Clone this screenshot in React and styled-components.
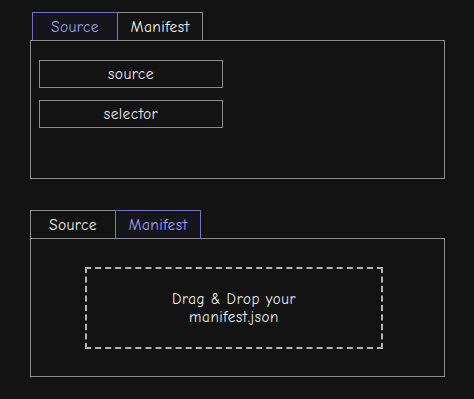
import React, { useState } from 'react'
import styled, { createGlobalStyle } from 'styled-components'

const Global = createGlobalStyle`
    body {
        margin: 0;
        background: #131313;
        font-family: "Comic Neue", "Open Sans", "DejaVu Sans", sans-serif;
    }
`

const Page = styled.div`
    display: flex;
    flex-direction: column;
    gap: 31px;
    padding: 12px 0 0 30px;
    width: 415px;
`

const Panel = styled.div`
    display: flex;
    flex-direction: column;
`

const Tabs = styled.div`
    display: flex;
    padding-left: ${({ $inset }) => $inset}px;
`

const Tab = styled.button`
    width: 86px;
    height: 28px;
    margin-right: -1px;
    background: ${({ $active }) => ($active ? '#15151b' : '#131313')};
    border: 1px solid ${({ $active }) => ($active ? '#6f74c4' : '#8c8c8c')};
    border-bottom: none;
    color: ${({ $active }) => ($active ? '#9aa0f5' : '#f0f0f0')};
    font-family: inherit;
    font-size: 15.5px;
    letter-spacing: 0.4px;
    padding: 0;
    cursor: pointer;
    position: relative;
    z-index: ${({ $active }) => ($active ? 1 : 0)};
`

const Box = styled.div`
    border: 1px solid #8c8c8c;
    box-sizing: border-box;
    height: 139px;
`

const Fields = styled.div`
    display: flex;
    flex-direction: column;
    gap: 12px;
    padding: 19px 0 0 8px;
`

const Field = styled.div`
    width: 184px;
    height: 28px;
    box-sizing: border-box;
    border: 1px solid #8c8c8c;
    color: #ececec;
    font-size: 15.5px;
    letter-spacing: 0.4px;
    display: flex;
    align-items: center;
    justify-content: center;
`

const Drop = styled.div`
    width: 298px;
    height: 82px;
    box-sizing: border-box;
    margin: 28px 0 0 54px;
    border: 2px dashed #b4b4b4;
    color: #ececec;
    font-size: 15px;
    letter-spacing: 0.6px;
    line-height: 18px;
    display: flex;
    align-items: center;
    justify-content: center;
    text-align: center;
`

function SourcePanel({ tab, inset }) {
  const [active, setActive] = useState(tab)
  return (
    <Panel>
      <Tabs $inset={inset}>
        <Tab $active={active === 'source'} onClick={() => setActive('source')}>Source</Tab>
        <Tab $active={active === 'manifest'} onClick={() => setActive('manifest')}>Manifest</Tab>
      </Tabs>
      <Box>
        {active === 'source' ? (
          <Fields>
            <Field>source</Field>
            <Field>selector</Field>
          </Fields>
        ) : (
          <Drop>Drag &amp; Drop your<br />manifest.json</Drop>
        )}
      </Box>
    </Panel>
  )
}

export default function App() {
  return (
    <>
      <Global />
      <Page>
        <SourcePanel tab="source" inset={2} />
        <SourcePanel tab="manifest" inset={0} />
      </Page>
    </>
  )
}
